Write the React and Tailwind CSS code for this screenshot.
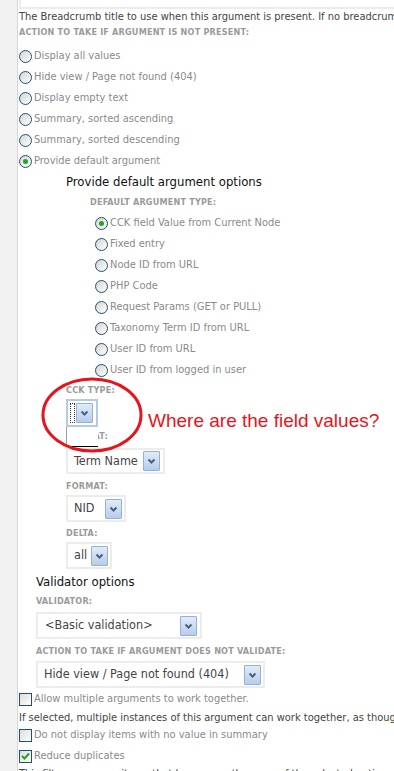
import React from "react";

const FONT = "font-['DejaVu_Sans_Condensed','DejaVu_Sans','Liberation_Sans',sans-serif]";

function Radio({ checked }) {
  return (
    <span className="w-[13px] h-[13px] rounded-full border border-[#1f4f7f] bg-[linear-gradient(135deg,#d4d4cf,#ffffff)] flex items-center justify-center shrink-0">
      {checked && <span className="w-[5px] h-[5px] rounded-full bg-[#22a622]" />}
    </span>
  );
}

function Check({ checked }) {
  return (
    <span className="w-[13px] h-[13px] border border-[#1f4f7f] bg-[linear-gradient(135deg,#dcdcd7,#ffffff)] flex items-center justify-center shrink-0">
      {checked && (
        <svg width="9" height="8" viewBox="0 0 9 8">
          <path d="M1 4 L3.5 6.5 L8 1.5" stroke="#21a121" strokeWidth="2" fill="none" />
        </svg>
      )}
    </span>
  );
}

function Btn() {
  return (
    <span className="w-[17px] h-[20px] border border-[#93b1d6] bg-[linear-gradient(#e0ebf8,#b8cdea)] flex items-center justify-center shrink-0 rounded-[1px]">
      <svg width="9" height="6" viewBox="0 0 9 6">
        <path d="M1.5 1.5 L4.5 4.5 L7.5 1.5" stroke="#4a5f82" strokeWidth="2" fill="none" />
      </svg>
    </span>
  );
}

function RadioRow({ label, checked }) {
  return (
    <div className="h-[21px] shrink-0 flex items-center gap-[2px]">
      <Radio checked={checked} />
      <span className="text-[11px] text-[#8a8a8a] whitespace-nowrap">{label}</span>
    </div>
  );
}

function Label({ children, className = "" }) {
  return (
    <div className={"shrink-0 text-[9px] font-bold text-[#9a9a9a] tracking-[0.2px] whitespace-nowrap flex items-center " + className}>
      {children}
    </div>
  );
}

export default function App() {
  return (
    <div className={"flex w-[394px] h-[771px] overflow-hidden bg-white " + FONT}>
      <div className="w-[18px] shrink-0 bg-[#f2f2f2] border-r border-[#d6d6d6]" />
      <div className="flex-1 relative flex flex-col min-w-0 [&>*]:shrink-0">
        <div className="h-[9px] ml-[1px] border-l-2 border-b-2 border-[#ececec]" />
        <div className="h-[16px] leading-[16px] text-[11px] text-[#444] whitespace-nowrap ml-[1px]">
          The Breadcrumb title to use when this argument is present. If no breadcrumb title is set, the default will be used.
        </div>
        <Label className="h-[16px] ml-[1px]">ACTION TO TAKE IF ARGUMENT IS NOT PRESENT:</Label>

        <div className="mt-[5px] ml-[1px] flex flex-col">
          <RadioRow label="Display all values" />
          <RadioRow label="Hide view / Page not found (404)" />
          <RadioRow label="Display empty text" />
          <RadioRow label="Summary, sorted ascending" />
          <RadioRow label="Summary, sorted descending" />
          <RadioRow label="Provide default argument" checked />
        </div>

        <div className="h-[20px] flex items-center ml-[48px] text-[13px] text-[#111] whitespace-nowrap">
          Provide default argument options
        </div>
        <Label className="h-[20px] pt-[1px] ml-[72px]">DEFAULT ARGUMENT TYPE:</Label>

        <div className="mt-[1px] ml-[77px] flex flex-col">
          <RadioRow label="CCK field Value from Current Node" checked />
          <RadioRow label="Fixed entry" />
          <RadioRow label="Node ID from URL" />
          <RadioRow label="PHP Code" />
          <RadioRow label="Request Params (GET or PULL)" />
          <RadioRow label="Taxonomy Term ID from URL" />
          <RadioRow label="User ID from URL" />
          <RadioRow label="User ID from logged in user" />
        </div>

        <div className="ml-[48px] flex flex-col items-start [&>*]:shrink-0">
          <Label className="h-[18px] pt-[1px]">CCK TYPE:</Label>
          <div className="w-[32px] h-[28px] border-2 border-[#b3cae6] bg-white flex items-center pl-[2px]">
            <span className="w-[5px] h-[20px] border border-dotted border-[#333]" />
            <span className="ml-[1px]"><Btn /></span>
          </div>
          <div className="relative h-[21px] w-[80px]">
            <Label className="h-[20px]">FORMAT:</Label>
            <div className="absolute left-0 top-0 w-[32px] h-[20px] bg-white border-l border-[#9c9c9c] border-b border-b-[#000]" />
          </div>
          <div className="w-[99px] h-[26px] border-2 border-[#ececec] bg-white flex items-center pl-[6px] pr-[3px]">
            <span className="flex-1 text-[12.5px] text-[#444] whitespace-nowrap">Term Name</span>
            <Btn />
          </div>
          <Label className="h-[21px] pt-[5px]">FORMAT:</Label>
          <div className="w-[60px] h-[27px] border-2 border-[#ececec] bg-white flex items-center pl-[6px] pr-[2px]">
            <span className="flex-1 text-[12.5px] text-[#444] whitespace-nowrap">NID</span>
            <Btn />
          </div>
          <Label className="h-[20px] pt-[4px]">DELTA:</Label>
          <div className="w-[46px] h-[27px] border-2 border-[#ececec] bg-white flex items-center pl-[6px] pr-[2px]">
            <span className="flex-1 text-[12.5px] text-[#444] whitespace-nowrap">all</span>
            <Btn />
          </div>
        </div>

        <div className="mt-[2px] ml-[18px] flex flex-col items-start [&>*]:shrink-0">
          <div className="h-[22px] flex items-center text-[13px] text-[#111] whitespace-nowrap">Validator options</div>
          <Label className="h-[18px]">VALIDATOR:</Label>
          <div className="mt-[1px] w-[166px] h-[27px] border-2 border-[#ececec] bg-white flex items-center pl-[7px] pr-[3px]">
            <span className="flex-1 text-[12.5px] text-[#444] whitespace-nowrap">&lt;Basic validation&gt;</span>
            <Btn />
          </div>
          <Label className="h-[22px] pt-[3px]">ACTION TO TAKE IF ARGUMENT DOES NOT VALIDATE:</Label>
          <div className="w-[229px] h-[27px] border-2 border-[#ececec] bg-white flex items-center pl-[6px] pr-[2px]">
            <span className="flex-1 text-[12.5px] text-[#444] whitespace-nowrap">Hide view / Page not found (404)</span>
            <Btn />
          </div>
        </div>

        <div className="h-[22px] ml-[1px] flex items-center gap-[2px]">
          <Check />
          <span className="text-[11px] text-[#8a8a8a] whitespace-nowrap">Allow multiple arguments to work together.</span>
        </div>
        <div className="h-[13px] leading-[13px] pt-[1px] box-content ml-[1px] text-[11px] text-[#444] whitespace-nowrap">
          If selected, multiple instances of this argument can work together, as though multiple terms were supplied to the same argument.
        </div>
        <div className="h-[22px] ml-[1px] flex items-center gap-[2px]">
          <Check />
          <span className="text-[11px] text-[#8a8a8a] whitespace-nowrap">Do not display items with no value in summary</span>
        </div>
        <div className="h-[20px] ml-[1px] flex items-center gap-[2px]">
          <Check checked />
          <span className="text-[11px] text-[#8a8a8a] whitespace-nowrap">Reduce duplicates</span>
        </div>
        <div className="h-[16px] leading-[16px] ml-[1px] text-[11px] text-[#444] whitespace-nowrap">
          This filter can cause items that have more than one of the selected options to appear as duplicate results.
        </div>

        <svg className="absolute left-[22px] top-[375px]" width="106" height="80" viewBox="0 0 106 80">
          <ellipse cx="52" cy="40" rx="49" ry="36" fill="none" stroke="#e8141b" strokeWidth="3" />
        </svg>
        <div className="absolute left-[130px] top-[407px] text-[19px] text-[#e8141b] whitespace-nowrap font-['Liberation_Sans',Arial,sans-serif]">
          Where are the field values?
        </div>
      </div>
    </div>
  );
}
